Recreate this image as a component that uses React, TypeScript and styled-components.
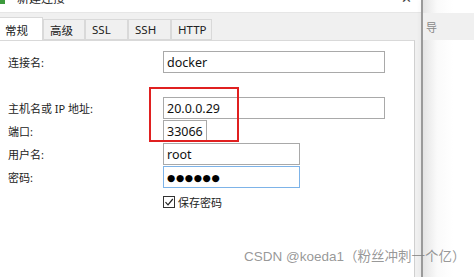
import * as React from "react";
import styled, { createGlobalStyle } from "styled-components";

const GlobalStyle = createGlobalStyle`
  html, body {
    margin: 0;
    padding: 0;
    background: #ffffff;
  }
  body {
    font-family: "Noto Sans", "Noto Sans CJK SC", sans-serif;
    color: #1a1a1a;
  }
`;

const Screen = styled.div`
  position: relative;
  width: 474px;
  height: 277px;
  overflow: hidden;
  display: flex;
  flex-direction: row;
  background: #ffffff;
`;

const Dialog = styled.div`
  width: 421px;
  display: flex;
  flex-direction: column;
  background: #f0f0f0;
`;

const TitleBar = styled.div`
  height: 12px;
  background: #ffffff;
  display: flex;
  align-items: flex-start;
  overflow: hidden;
  border-bottom: 1px solid #e6e6e6;
`;

const AppIcon = styled.div`
  width: 5px;
  height: 6px;
  background: #3c9a3c;
  margin-top: -2px;
`;

const TitleText = styled.span`
  margin-left: 12px;
  margin-top: -10px;
  font-size: 12px;
  line-height: 16px;
  color: #222;
  font-family: "Noto Sans CJK SC", sans-serif;
`;

const CloseGlyph = styled.span`
  margin-left: auto;
  margin-right: 9px;
  margin-top: -9px;
  font-size: 13px;
  line-height: 16px;
  color: #444;
  font-family: "DejaVu Sans", sans-serif;
`;

const TabStrip = styled.div`
  height: 27px;
  display: flex;
  align-items: flex-end;
  background: #f0f0f0;
`;

const Tab = styled.div<{ $active?: boolean; $w: number }>`
  box-sizing: border-box;
  width: ${(p) => p.$w}px;
  height: ${(p) => (p.$active ? 24 : 21)}px;
  padding-left: ${(p) => (p.$active ? 5 : 6)}px;
  display: flex;
  align-items: center;
  background: ${(p) => (p.$active ? "#ffffff" : "#f0f0f0")};
  border: 1px solid #d9d9d9;
  border-bottom: ${(p) => (p.$active ? "none" : "1px solid #d9d9d9")};
  border-left: ${(p) => (p.$active ? "none" : "1px solid #d9d9d9")};
  margin-bottom: ${(p) => (p.$active ? -1 : 0)}px;
  font-size: 11.5px;
  color: #222;
  font-family: "Noto Sans", "Noto Sans CJK SC", sans-serif;
`;

const Body = styled.div`
  flex: 1;
  display: flex;
  padding-right: 6px;
`;

const Panel = styled.div`
  flex: 1;
  background: #ffffff;
  border-top: 1px solid #d9d9d9;
  border-right: 1px solid #d0d0d0;
  display: flex;
  flex-direction: column;
  padding-top: 10px;
`;

const Row = styled.div<{ $gap: number }>`
  display: flex;
  align-items: center;
  margin-top: ${(p) => p.$gap}px;
`;

const Label = styled.div`
  width: 163px;
  box-sizing: border-box;
  padding-left: 8px;
  font-size: 11px;
  color: #222;
  font-family: "Noto Sans", "Noto Sans CJK SC", sans-serif;
`;

const Field = styled.div<{ $w: number; $focus?: boolean }>`
  box-sizing: border-box;
  width: ${(p) => p.$w}px;
  height: 22px;
  border: 1px solid ${(p) => (p.$focus ? "#7db3e8" : "#a9a9a9")};
  padding-left: 3px;
  display: flex;
  align-items: center;
  font-size: 12.5px;
  color: #111;
  font-family: "Noto Sans", sans-serif;
`;

const Dots = styled.span`
  font-size: 9.5px;
  letter-spacing: 0.6px;
  font-family: "DejaVu Sans", sans-serif;
  color: #000;
`;

const CheckRow = styled.div`
  display: flex;
  align-items: center;
  margin-top: 6px;
  padding-left: 163px;
  gap: 3px;
  font-size: 11px;
  color: #222;
  font-family: "Noto Sans CJK SC", sans-serif;
`;

const Box = styled.div`
  width: 12px;
  height: 12px;
  box-sizing: border-box;
  border: 1px solid #333;
  display: flex;
  align-items: center;
  justify-content: center;
  background: #fff;
`;

const Divider = styled.div`
  width: 2px;
  background: #9a9a9a;
  box-shadow: 2px 0 6px rgba(0, 0, 0, 0.18);
`;

const BackWindow = styled.div`
  flex: 1;
  display: flex;
  flex-direction: column;
  background: linear-gradient(to right, #e4e4e4, #fafafa 14px, #ffffff 30px);
`;

const BackTop = styled.div`
  height: 13px;
`;

const BackStrip = styled.div`
  height: 27px;
  background: #f0f0f0;
  display: flex;
  align-items: center;
  padding-left: 3px;
  font-size: 11px;
  color: #888;
  font-family: "Noto Sans CJK SC", sans-serif;
`;

// annotation drawn over the form
const RedMark = styled.div`
  position: absolute;
  left: 149px;
  top: 87px;
  width: 90px;
  height: 55px;
  box-sizing: border-box;
  border: 2px solid #e02020;
  pointer-events: none;
`;

const Watermark = styled.div`
  position: absolute;
  left: 244px;
  top: 247px;
  font-size: 13.5px;
  line-height: 20px;
  color: rgba(125, 125, 125, 0.8);
  font-family: "Liberation Sans", "Noto Sans CJK SC", sans-serif;
  white-space: nowrap;
`;

const tabs = [
  { name: "常规", w: 43 },
  { name: "高级", w: 42 },
  { name: "SSL", w: 43 },
  { name: "SSH", w: 43 },
  { name: "HTTP", w: 41 },
];

export default function App() {
  return (
    <>
      <GlobalStyle />
      <Screen>
        <Dialog>
          <TitleBar>
            <AppIcon />
            <TitleText>新建连接</TitleText>
            <CloseGlyph>✕</CloseGlyph>
          </TitleBar>
          <TabStrip>
            {tabs.map((t, i) => (
              <Tab key={t.name} $w={t.w} $active={i === 0}>
                {t.name}
              </Tab>
            ))}
          </TabStrip>
          <Body>
            <Panel>
              <Row $gap={0}>
                <Label>连接名:</Label>
                <Field $w={222}>docker</Field>
              </Row>
              <Row $gap={24}>
                <Label>主机名或 IP 地址:</Label>
                <Field $w={222}>20.0.0.29</Field>
              </Row>
              <Row $gap={1}>
                <Label>端口:</Label>
                <Field $w={44}>33066</Field>
              </Row>
              <Row $gap={1}>
                <Label>用户名:</Label>
                <Field $w={137}>root</Field>
              </Row>
              <Row $gap={1}>
                <Label>密码:</Label>
                <Field $w={137} $focus>
                  <Dots>●●●●●●</Dots>
                </Field>
              </Row>
              <CheckRow>
                <Box>
                  <svg width="10" height="10" viewBox="0 0 10 10">
                    <path d="M1.5 5.2 L4 7.8 L8.8 2" fill="none" stroke="#222" strokeWidth="1.2" />
                  </svg>
                </Box>
                保存密码
              </CheckRow>
            </Panel>
          </Body>
        </Dialog>
        <Divider />
        <BackWindow>
          <BackTop />
          <BackStrip>导</BackStrip>
        </BackWindow>
        <RedMark />
        <Watermark>CSDN @koeda1（粉丝冲刺一个亿）</Watermark>
      </Screen>
    </>
  );
}
